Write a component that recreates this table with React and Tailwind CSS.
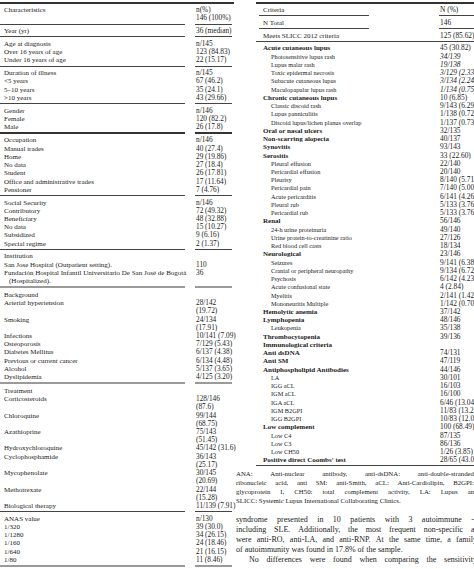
import React from 'react';

const leftSections = [
    { rows: [["Characteristics", "n(%)"], ["", "146 (100%)"]], rule: "thin" },
    { rows: [["Year (yr)", "36 (median)"]], rule: "thin" },
    { rows: [["Age at diagnosis", "n/145"], ["Over 16 years of age", "123 (84.83)"], ["Under 16 years of age", "22 (15.17)"]], rule: "thin" },
    { rows: [["Duration of illness", "n/145"], ["<5 years", "67 (46.2)"], ["5–10 years", "35 (24.1)"], [">10 years", "43 (29.66)"]], rule: "thin" },
    { rows: [["Gender", "n/146"], ["Female", "120 (82.2)"], ["Male", "26 (17.8)"]], rule: "dark" },
    {
        rows: [["Occupation", "n/146"], ["Manual trades", "40 (27.4)"], ["Home", "29 (19.86)"], ["No data", "27 (18.4)"],
            ["Student", "26 (17.81)"], ["Office and administrative trades", "17 (11.64)"], ["Pensioner", "7 (4.76)"]], rule: "thin"
    },
    {
        rows: [["Social Security", "n/146"], ["Contributory", "72 (49.32)"], ["Beneficiary", "48 (32.88)"], ["No data", "15 (10.27)"],
            ["Subsidized", "9 (6.16)"], ["Special regime", "2 (1.37)"]], rule: "thin"
    },
    {
        rows: [["Institution", ""], ["San Jose Hospital (Outpatient setting).", "110"],
            ["Fundación Hospital Infantil Universitario De San José de Bogotá", "36"], ["(Hospitalized).", "", true]], rule: "gray"
    },
    {
        rows: [["Background", ""], ["Arterial hypertension", "28/142"], ["", "(19.72)"], ["Smoking", "24/134"], ["", "(17.91)"],
            ["Infections", "10/141 (7.09)"], ["Osteoporosis", "7/129 (5.43)"], ["Diabetes Mellitus", "6/137 (4.38)"],
            ["Previous or current cancer", "6/134 (4.48)"], ["Alcohol", "5/137 (3.65)"], ["Dyslipidemia", "4/125 (3.20)"]], rule: "gray"
    },
    {
        rows: [["Treatment", ""], ["Corticosteroids", "128/146"], ["", "(87.6)"], ["Chloroquine", "99/144"], ["", "(68.75)"],
            ["Azathioprine", "75/143"], ["", "(51.45)"], ["Hydroxychloroquine", "45/142 (31.6)"], ["Cyclophosphamide", "36/143"],
            ["", "(25.17)"], ["Mycophenolate", "30/145"], ["", "(20.69)"], ["Methotrexate", "22/144"], ["", "(15.28)"],
            ["Biological therapy", "11/139 (7.91)"]], rule: "thin"
    },
    {
        rows: [["ANAS value", "n/130"], ["1/320", "39 (30.0)"], ["1/1280", "34 (26.15)"], ["1/160", "24 (18.46)"],
            ["1/640", "21 (16.15)"], ["1/80", "11 (8.46)"]], rule: "gray"
    },
];

// [label, value, kind] kind: b = bold heading, s = sub item, i = sub item italic value
const criteria = [
    ["Acute cutaneous lupus", "45 (30.82)", "b"],
    ["Photosensitive lupus rash", "34/139", "i"],
    ["Lupus malar rash", "19/138", "i"],
    ["Toxic epidermal necrosis", "3/129 (2.33)", "i"],
    ["Subacute cutaneous lupus", "3/134 (2.24)", "i"],
    ["Maculopapular lupus rash", "1/134 (0.75)", "i"],
    ["Chronic cutaneous lupus", "10 (6.85)", "b"],
    ["Classic discoid rash", "9/143 (6.29)", "s"],
    ["Lupus panniculitis", "1/138 (0.72)", "s"],
    ["Discoid lupus/lichen planus overlap", "1/137 (0.73)", "s"],
    ["Oral or nasal ulcers", "32/135", "b"],
    ["Non-scarring alopecia", "40/137", "b"],
    ["Synovitis", "93/143", "b"],
    ["Serositis", "33 (22.60)", "b"],
    ["Pleural effusion", "22/140", "s"],
    ["Pericardial effusion", "20/140", "s"],
    ["Pleurisy", "8/140 (5.71)", "s"],
    ["Pericardial pain", "7/140 (5.00)", "s"],
    ["Acute pericarditis", "6/141 (4.26)", "s"],
    ["Pleural rub", "5/133 (3.76)", "s"],
    ["Pericardial rub", "5/133 (3.76)", "s"],
    ["Renal", "56/146", "b"],
    ["24-h urine proteinuria", "49/140", "s"],
    ["Urine protein-to-creatinine ratio", "27/126", "s"],
    ["Red blood cell casts", "18/134", "s"],
    ["Neurological", "23/146", "b"],
    ["Seizures", "9/141 (6.38)", "s"],
    ["Cranial or peripheral neuropathy", "9/134 (6.72)", "s"],
    ["Psychosis", "6/142 (4.23)", "s"],
    ["Acute confusional state", "4 (2.84)", "s"],
    ["Myelitis", "2/141 (1.42)", "s"],
    ["Mononeuritis Multiple", "1/142 (0.70)", "s"],
    ["Hemolytic anemia", "37/142", "b"],
    ["Lymphopenia", "48/146", "b"],
    ["Leukopenia", "35/138", "s"],
    ["Thrombocytopenia", "39/136", "b"],
    ["Immunological criteria", "", "b"],
    ["Anti dsDNA", "74/131", "b"],
    ["Anti SM", "47/119", "b"],
    ["Antiphospholipid Antibodies", "44/146", "b"],
    ["LA", "30/101", "s"],
    ["IGG aCL", "16/103", "s"],
    ["IGM aCL", "16/100", "s"],
    ["IGA aCL", "6/46 (13.04)", "s"],
    ["IGM B2GPI", "11/83 (13.25)", "s"],
    ["IGG B2GPI", "10/83 (12.05)", "s"],
    ["Low complement", "100 (68.49)", "b"],
    ["Low C4", "87/135", "s"],
    ["Low C3", "86/136", "s"],
    ["Low CH50", "1/26 (3.85)", "s"],
    ["Positive direct Coombs' test", "28/65 (43.08)", "b"],
];

const SplitRule = ({ kind }) => {
    const cls = kind === "gray" ? "h-[2px] bg-[#9a9a9a]" : kind === "dark" ? "h-[1.5px] bg-[#333]" : "h-px bg-[#444]";
    return (
        <div className="flex">
            <div className={`w-[185px] ${cls}`}></div>
            <div className={`ml-[10px] w-[37px] ${cls}`}></div>
        </div>
    );
};

const Words = ({ text, className }) => (
    <div className={`flex justify-between whitespace-nowrap ${className}`}>
        {text.split(" ").map((w, i) => <span key={i} className="flex-none">{w}</span>)}
    </div>
);

export default function App() {
    return (
        <div className="w-[474px] h-[569px] overflow-hidden bg-white text-[#222] font-['Liberation_Serif','Times_New_Roman',serif] flex">
            {/* left table */}
            <div className="w-[236px] shrink-0 pt-[2px] text-[7px] leading-[8.22px]">
                <div className="w-[234px] h-[1.5px] bg-[#333]"></div>
                {leftSections.map((s, i) => (
                    <div key={i}>
                        <div className="pt-[2.6px] pb-[1px]">
                            {s.rows.map(([label, value, indent], j) => (
                                <div key={j} className="flex whitespace-nowrap h-[8.22px]">
                                    <div className={indent ? "w-[196px] pl-[9px]" : "w-[196px] pl-[4px]"}>{label}</div>
                                    <div className="text-[7.3px]">{value}</div>
                                </div>
                            ))}
                        </div>
                        <SplitRule kind={s.rule} />
                    </div>
                ))}
            </div>

            {/* right column */}
            <div className="w-[300px] shrink-0 pt-[2px]">
                <div className="ml-[20px] text-[7px] leading-[8.22px]">
                    <div className="h-[1.5px] bg-[#333]"></div>
                    <div className="pt-[2.6px] pb-[1px] flex whitespace-nowrap h-[11.8px]">
                        <div className="w-[184px] pl-[7px]">Criteria</div>
                        <div className="text-[7.4px]">N (%)</div>
                    </div>
                    <div className="flex">
                        <div className="ml-[3px] w-[110px] h-px bg-[#444]"></div>
                        <div className="ml-[70px] flex-1 h-px bg-[#444]"></div>
                    </div>
                    <div className="pt-[2.6px] pb-[1px] flex whitespace-nowrap h-[11.8px]">
                        <div className="w-[184px] pl-[7px]">N Total</div>
                        <div className="text-[7.4px]">146</div>
                    </div>
                    <div className="flex">
                        <div className="ml-[3px] w-[110px] h-px bg-[#444]"></div>
                        <div className="ml-[70px] flex-1 h-px bg-[#444]"></div>
                    </div>
                    <div className="pt-[2.6px] pb-[1px] flex whitespace-nowrap h-[11.8px]">
                        <div className="w-[184px] pl-[7px]">Meets SLICC 2012 criteria</div>
                        <div className="text-[7.4px]">125 (85.62)</div>
                    </div>
                    <div className="h-px bg-[#444]"></div>
                    <div className="pt-[2.6px] pb-[1px]">
                        {criteria.map(([label, value, kind], i) => (
                            <div key={i} className="flex whitespace-nowrap h-[8.24px]">
                                <div className={kind === "b" ? "w-[184px] pl-[7px] font-bold" : "w-[184px] pl-[15px] text-[6.3px]"}>{label}</div>
                                <div className={kind === "i" ? "text-[7.4px] italic" : "text-[7.4px]"}>{value}</div>
                            </div>
                        ))}
                    </div>
                    <div className="h-px bg-[#444]"></div>
                </div>

                {/* footnote */}
                <div className="mt-[4px] text-[6.8px] leading-[8.8px]">
                    <Words className="w-[238px]" text="ANA: Anti-nuclear antibody, anti-dsDNA: anti-double-stranded" />
                    <Words className="w-[238px]" text="ribonucleic acid, anti SM: anti-Smith, aCL: Anti-Cardiolipin, B2GPI:" />
                    <Words className="w-[270px]" text="glycoprotein I, CH50: total complement activity, LA: Lupus anticoagulant," />
                    <div className="whitespace-nowrap">SLICC: Systemic Lupus International Collaborating Clinics.</div>
                </div>

                {/* body text */}
                <div className="mt-[9px] text-[8px] leading-[10.2px]">
                    <Words className="w-[238px]" text="syndrome presented in 10 patients with 3 autoimmune -" />
                    <Words className="w-[268px]" text="including SLE. Additionally, the most frequent non-specific antibodies" />
                    <Words className="w-[241px]" text="were anti-RO, anti-LA, and anti-RNP. At the same time, a family" />
                    <div className="whitespace-nowrap">of autoimmunity was found in 17.8% of the sample.</div>
                    <Words className="w-[241px] pl-[13px]" text="No differences were found when comparing the sensitivity" />
                </div>
            </div>
        </div>
    );
}
